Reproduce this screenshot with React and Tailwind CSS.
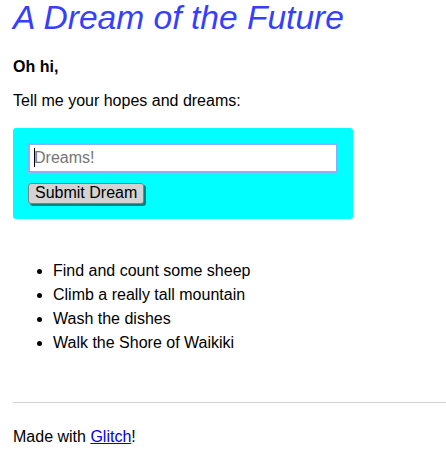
import React from 'react';

const dreams = [
  'Find and count some sheep',
  'Climb a really tall mountain',
  'Wash the dishes',
  'Walk the Shore of Waikiki',
];

const App = () => {
  return (
    <div className="min-h-[476px] bg-white pl-[13px] text-[16px] text-black font-['Liberation_Sans',Arial,sans-serif]">
      {/* Header */}
      <h1 className="m-0 text-[33.6px] leading-[36.8px] font-normal italic text-[#373fff]">
        A Dream of the Future
      </h1>

      <p className="mt-[21px] mb-4 font-bold leading-[18.4px]">Oh hi,</p>
      <p className="my-4 leading-[18.4px]">Tell me your hopes and dreams:</p>

      {/* Dream form */}
      <form
        className="mt-[17px] mb-[40px] w-[340px] rounded-[3px] bg-[#00ffff] p-[15px]"
        onSubmit={(e) => e.preventDefault()}
      >
        <div className="relative mb-[10px] w-[310px]">
          <input
            type="text"
            placeholder="Dreams!"
            className="block h-[30px] w-full border-2 border-[#8cb0ff] bg-white px-[4px] py-0 leading-[18.4px] outline-none placeholder:text-[#757575]"
          />
          <span className="absolute left-[6px] top-[5px] h-[19px] w-px bg-black" />
        </div>
        <button
          type="submit"
          className="block h-[21px] rounded-[3px] border border-[#808080] bg-[#d3d3d3] px-[6px] py-0 leading-[18.4px] shadow-[2px_2px_0_#008080]"
        >
          Submit Dream
        </button>
      </form>

      {/* Dream list */}
      <ul className="m-0 list-disc pl-10 leading-6">
        {dreams.map((d) => (
          <li key={d}>{d}</li>
        ))}
      </ul>

      {/* Footer */}
      <footer className="mt-[47px] border-t border-[#d3d3d3] pt-[25px] leading-[18.4px]">
        Made with{' '}
        <a href="#" className="text-[#0000ee] underline">
          Glitch
        </a>
        !
      </footer>
    </div>
  );
};

export default App;
